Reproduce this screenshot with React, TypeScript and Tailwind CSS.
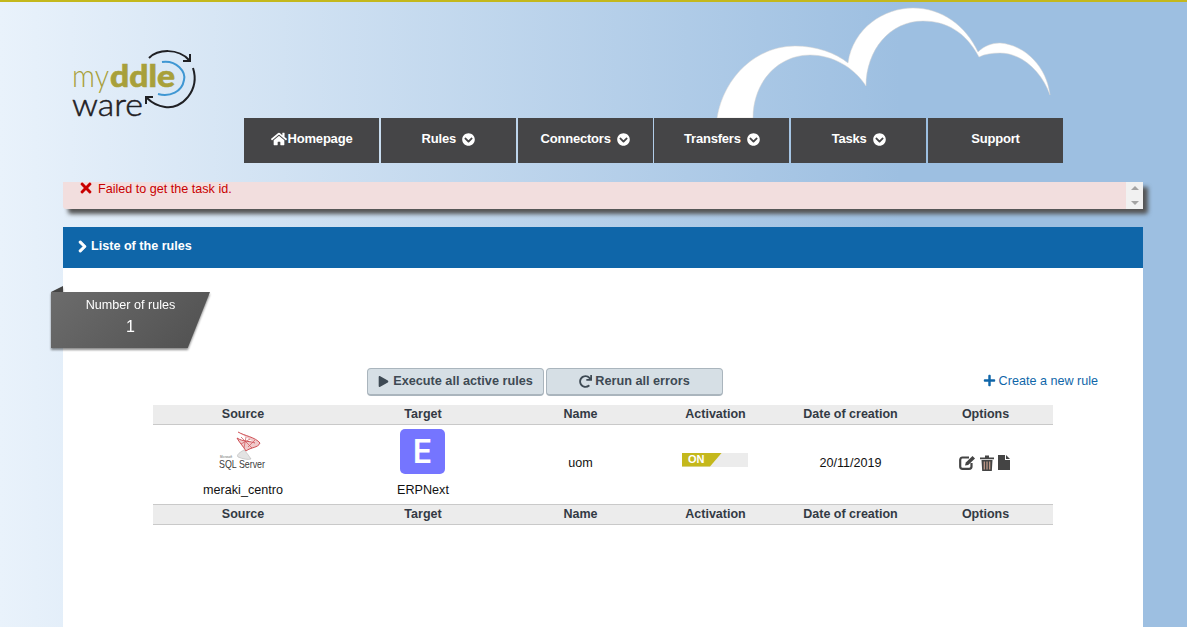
import React from "react";
import { FaChevronCircleDown, FaChevronRight, FaHome, FaPlay, FaPlus, FaRedo, FaTimes } from "react-icons/fa";

const columns = ["Source", "Target", "Name", "Activation", "Date of creation", "Options"];
const menu = [
    { label: "Homepage", home: true },
    { label: "Rules", caret: true },
    { label: "Connectors", caret: true },
    { label: "Transfers", caret: true },
    { label: "Tasks", caret: true },
    { label: "Support" },
];

function Logo() {
    return (
        <svg width="130" height="72" viewBox="70 48 130 72" className="shrink-0">
            <text x="72" y="87" fontFamily="Lato" fontSize="31" fontWeight="300" fill="#a8a03a" textLength="37" lengthAdjust="spacingAndGlyphs">my</text>
            <text x="110" y="87" fontFamily="Lato" fontSize="31" fontWeight="900" fill="#a8a03a" stroke="#a8a03a" strokeWidth="0.6" textLength="65" lengthAdjust="spacingAndGlyphs">ddle</text>
            <text x="72" y="116" fontFamily="Lato" fontSize="31" fontWeight="300" fill="#1f2024" textLength="71" lengthAdjust="spacingAndGlyphs" stroke="#1f2024" strokeWidth="0.5">ware</text>
            <path d="M149 58 C158 49 178 48 189 60" fill="none" stroke="#1f2024" strokeWidth="2" />
            <path d="M190 54 L190 61 L183 61" fill="none" stroke="#1f2024" strokeWidth="2" />
            <path d="M193 68 C200 90 182 110 165 107 C158 106 152 103 147 98" fill="none" stroke="#1f2024" strokeWidth="2" />
            <path d="M146 104 L146 97 L153 97" fill="none" stroke="#1f2024" strokeWidth="2" />
            <path d="M162 62 C177 60 186 72 184 80 C182 92 170 97 158 94" fill="none" stroke="#3f97d3" strokeWidth="2" />
        </svg>
    );
}

function Cloud() {
    return (
        <svg className="absolute left-0 top-[-2px]" width="1187" height="118" viewBox="0 0 1187 118">
            <path d="M717 118 C724 76 757 46 795 46 C816 46 836 53 848 63 C853 28 884 8 913 8 C942 8 966 26 978 52 C984 46 992 43 1000 43 C1026 45 1047 68 1050 95 C1042 72 1022 53 1000 53 C992 53 985 54 979 57 C966 32 946 21 923 21 C890 21 866 50 866 86 C854 67 832 55 810 55 C778 55 753 82 753 118 Z" fill="#ffffff" stroke="#d8d4d0" strokeWidth="0.5" />
        </svg>
    );
}

function SqlServerLogo() {
    return (
        <svg width="48" height="40" viewBox="0 0 48 40">
            <path d="M19 1 C26 5 36 6 41 12 C39 17 32 16 27 20 C24 15 20 11 18 7 C24 11 32 10 36 12" fill="#f0c9ca" stroke="#cf4f55" strokeWidth="1" />
            <path d="M22 6 L33 17 M27 6 L25 17 M31 8 L22 13 M36 9 L29 16" fill="none" stroke="#cf4f55" strokeWidth="0.7" />
            <path d="M25 19 C21 21 17 24 19 26 C24 28 29 29 32 28 C30 25 28 22 25 19 Z" fill="#e3e3e3" stroke="#b5b5b5" strokeWidth="0.6" />
            <text x="1" y="27" fontFamily="Liberation Sans" fontSize="3" fill="#666666">Microsoft</text>
            <text x="0" y="37" fontFamily="Liberation Sans" fontSize="11" fill="#3a3a3a" textLength="46" lengthAdjust="spacingAndGlyphs">SQL Server</text>
        </svg>
    );
}

function EditIcon() {
    return (
        <svg width="17" height="15" viewBox="0 0 17 15">
            <path d="M10 2.5 H3.5 Q1.2 2.5 1.2 5 V11.5 Q1.2 13.8 3.5 13.8 H10 Q12.5 13.8 12.5 11.5 V8" fill="none" stroke="#444" strokeWidth="2.2" />
            <path d="M6 10.5 L6.8 7.5 L13.5 1 L16 3.4 L9.2 10 Z" fill="#444" />
        </svg>
    );
}

function TrashIcon() {
    return (
        <svg width="14" height="16" viewBox="0 0 14 16">
            <path d="M0 2.5 H14 V4.2 H0 Z M5 0.5 H9 V2.5 H5 Z" fill="#444" />
            <path d="M1.5 5 H12.5 L11.8 16 H2.2 Z" fill="#444" />
            <path d="M4.3 6.5 V14.5 M7 6.5 V14.5 M9.7 6.5 V14.5" stroke="#c9a08e" strokeWidth="1.2" />
        </svg>
    );
}

function FileIcon() {
    return (
        <svg width="12" height="15" viewBox="0 0 12 15">
            <path d="M0 0 H7 V5 H12 V15 H0 Z M8 0 L12 4 H8 Z" fill="#444" />
        </svg>
    );
}

function HeaderRow() {
    return (
        <div className="grid h-5 grid-cols-[180px_180px_135px_135px_135px_135px] items-center border-b border-[#c9c9c9] bg-[#ececec] text-center text-[12.5px] font-bold text-[#333a44]">
            {columns.map(column => <div key={column}>{column}</div>)}
        </div>
    );
}

export default function App() {
    return (
        <div className="relative flex h-screen flex-col overflow-hidden border-t-2 border-[#c4b81c] bg-[linear-gradient(to_right,#e9f2fb_0,#9dbfe1_900px)] font-['Liberation_Sans',Arial,sans-serif]">
            <Cloud />
            <header className="relative flex h-[161px] shrink-0 pl-[70px]">
                <div className="mt-[46px]"><Logo /></div>
                <nav className="ml-[44px] mt-[116px] grid h-[45px] w-[819px] grid-cols-6 gap-[1.8px]">
                    {menu.map(item => (
                        <a key={item.label} href="#" className="flex items-center justify-center gap-[6px] bg-[#454547] pb-[3px] text-[13px] font-bold tracking-[-0.2px] text-white">
                            {item.home ? <FaHome className="mr-[-5px] text-[16px]" /> : null}
                            {item.label}
                            {item.caret ? <FaChevronCircleDown className="text-[13px]" /> : null}
                        </a>
                    ))}
                </nav>
            </header>

            <main className="relative ml-[63px] mr-[44px] mt-[19px] flex flex-1 flex-col">
                <div className="flex h-[27px] shrink-0 rounded-b-[3px] bg-[#f2dede] shadow-[5px_5px_4px_#555]">
                    <div className="flex flex-1 items-start pl-[15px] text-[12.6px] leading-[15px] text-[#c90000]">
                        <FaTimes className="mr-[4px] mt-[-2px] text-[16px]" />
                        <span>Failed to get the task id.</span>
                    </div>
                    <div className="flex w-[17px] flex-col items-center justify-between bg-[#f1f1f1] py-[4px]">
                        <div className="h-0 w-0 border-x-[4px] border-b-[4px] border-x-transparent border-b-[#a3a3a3]" />
                        <div className="h-0 w-0 border-x-[4px] border-t-[4px] border-x-transparent border-t-[#a3a3a3]" />
                    </div>
                </div>

                <div className="mt-[18px] flex h-[41px] shrink-0 items-center bg-[#0f66a9] pb-[2px] pl-[13px] text-[12.6px] font-bold text-white">
                    <FaChevronRight className="mr-[2px] stroke-current stroke-[40] text-[13px]" />
                    Liste of the rules
                </div>

                <section className="flex flex-1 flex-col bg-white pl-[90px] pr-[45px] pt-[100px]">
                    <div className="absolute left-[-12px] top-[104px] drop-shadow-[0_2px_1px_rgba(0,0,0,0.45)]">
                        <div className="h-[6px] w-[12px] bg-[#444] [clip-path:polygon(0_100%,100%_0,100%_100%)]" />
                        <div className="flex h-[56px] w-[159px] flex-col items-center bg-[linear-gradient(135deg,#6c6c6c,#505050)] pt-[5px] text-white [clip-path:polygon(0_0,100%_0,86%_100%,0_100%)]">
                            <span className="text-[12.6px] leading-[16px]">Number of rules</span>
                            <span className="mt-[4px] text-base leading-[20px]">1</span>
                        </div>
                    </div>

                    <div className="relative flex h-[28px] items-center">
                        <div className="ml-[214px] flex gap-[2px]">
                            <button className="flex h-[28px] w-[177px] items-center justify-center gap-[4px] rounded-[4px] border border-b-2 border-[#aab5bd] bg-[#d6dfe5] text-[12.7px] font-bold text-[#3e4a54]">
                                <FaPlay className="text-[11px]" />
                                Execute all active rules
                            </button>
                            <button className="flex h-[28px] w-[177px] items-center justify-center gap-[3px] rounded-[4px] border border-b-2 border-[#aab5bd] bg-[#d6dfe5] text-[12.7px] font-bold text-[#3e4a54]">
                                <FaRedo className="text-[13px]" />
                                Rerun all errors
                            </button>
                        </div>
                        <a href="#" className="ml-auto flex items-center gap-[3px] pb-[2px] text-[12.6px] text-[#0f66a9]">
                            <FaPlus className="text-[13px]" />
                            Create a new rule
                        </a>
                    </div>

                    <div className="mt-[9px] w-[900px]">
                        <HeaderRow />
                        <div className="grid h-[80px] grid-cols-[180px_180px_135px_135px_135px_135px] items-center border-b border-[#c9c9c9] text-center text-[12.6px] text-[#111]">
                            <div className="flex flex-col items-center self-start pt-[6px]">
                                <SqlServerLogo />
                                <span className="mt-[12px] leading-[14px]">meraki_centro</span>
                            </div>
                            <div className="flex flex-col items-center self-start pt-[4px]">
                                <div className="mr-[1px] flex h-[45px] w-[45px] items-center justify-center rounded-[5px] bg-[#7575ff] font-['Inter'] text-[32px] font-semibold text-white">E</div>
                                <span className="mt-[9px] leading-[14px]">ERPNext</span>
                            </div>
                            <div className="pb-[2px]">uom</div>
                            <div className="flex justify-center pb-[10px] pr-[1px]">
                                <div className="h-[14px] w-[66px] bg-[#ececec]">
                                    <div className="flex h-[14px] w-[40px] items-center bg-[#c4b81c] pl-[6px] text-[11px] font-bold text-white [clip-path:polygon(0_0,100%_0,70%_100%,0_100%)]">ON</div>
                                </div>
                            </div>
                            <div className="pb-[2px]">20/11/2019</div>
                            <div className="flex items-center justify-center gap-[4px] pb-[4px] pr-[2px]">
                                <EditIcon />
                                <TrashIcon />
                                <FileIcon />
                            </div>
                        </div>
                        <HeaderRow />
                    </div>
                </section>
            </main>
        </div>
    );
}
